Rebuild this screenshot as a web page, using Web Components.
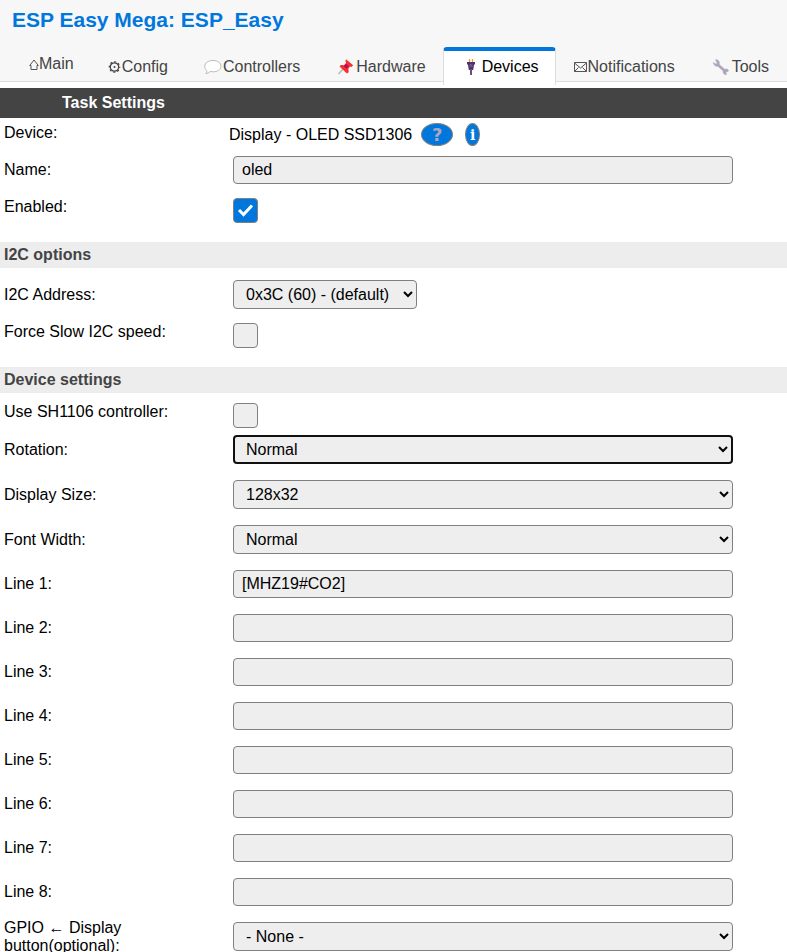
<!DOCTYPE html>
<html lang="en">
<head>
<meta charset="utf-8">
<title>ESP_Easy</title>
<style>
  html, body { margin: 0; }
  body { font: 16px/18px "Liberation Sans", Arial, sans-serif; color: #000; background: #fff; }
</style>
</head>
<body>
<esp-page>
  <esp-header slot="header" heading="ESP Easy Mega: ESP_Easy">
    <esp-tab icon="home" raised>Main</esp-tab>
    <esp-tab icon="gear">Config</esp-tab>
    <esp-tab icon="bubble">Controllers</esp-tab>
    <esp-tab icon="pin">Hardware</esp-tab>
    <esp-tab icon="plug" active>Devices</esp-tab>
    <esp-tab icon="mail">Notifications</esp-tab>
    <esp-tab icon="wrench">Tools</esp-tab>
  </esp-header>
  <esp-section main>Task Settings</esp-section>
  <esp-device label="Device:">Display - OLED SSD1306</esp-device>
  <esp-field type="text" label="Name:" value="oled"></esp-field>
  <esp-field type="checkbox" label="Enabled:" checked></esp-field>
  <esp-section>I2C options</esp-section>
  <esp-field type="select" label="I2C Address:" value="0x3C (60) - (default)" compact></esp-field>
  <esp-field type="checkbox" label="Force Slow I2C speed:"></esp-field>
  <esp-section>Device settings</esp-section>
  <esp-field type="checkbox" label="Use SH1106 controller:"></esp-field>
  <esp-field type="select" label="Rotation:" value="Normal" current></esp-field>
  <esp-field type="select" label="Display Size:" value="128x32"></esp-field>
  <esp-field type="select" label="Font Width:" value="Normal"></esp-field>
  <esp-field type="text" label="Line 1:" value="[MHZ19#CO2]"></esp-field>
  <esp-field type="text" label="Line 2:"></esp-field>
  <esp-field type="text" label="Line 3:"></esp-field>
  <esp-field type="text" label="Line 4:"></esp-field>
  <esp-field type="text" label="Line 5:"></esp-field>
  <esp-field type="text" label="Line 6:"></esp-field>
  <esp-field type="text" label="Line 7:"></esp-field>
  <esp-field type="text" label="Line 8:"></esp-field>
  <esp-field type="select" label="GPIO ← Display button(optional):" value="- None -"></esp-field>
</esp-page>
<script>
const define = (name, render) => customElements.define(name, class extends HTMLElement {
  connectedCallback() {
    if (this.shadowRoot) return;
    const t = document.createElement('template');
    t.innerHTML = render(this);
    this.attachShadow({ mode: 'open' }).append(t.content.cloneNode(true));
  }
});

const icons = {
  home: [10, 16, '<path d="M.7 9.500 5 4l4.300 5.500H8v4H2v-4z" fill="none" stroke="#555"/>'],
  gear: [14, 16, '<g fill="none" stroke="#444"><circle cx="6.500" cy="8" r="4.200" stroke-width="1.200"/><circle cx="6.500" cy="8" r="5.200" stroke-width="1.200" stroke-dasharray="2 2.084" stroke-dashoffset="1"/></g><circle cx="6.500" cy="8" r="1" fill="#444"/>'],
  bubble: [21, 16, '<path d="M11 1.500c4.600 0 8 2.300 8 5.700s-3.400 5.600-8 5.600c-1 0-2-.1-3-.3-1 1.200-2.300 1.900-4.200 2 .9-.8 1.200-1.700 1-2.900C3.400 10.500 2.800 9 2.800 7.200c0-3.400 3.600-5.700 8.200-5.700z" fill="#fff" stroke="#bbb"/>'],
  pin: [22, 16, '<path d="m9.500 9.500-5 5.500" stroke="#bbb" stroke-width="1.600"/><path d="m12 .3 7.200 6-1.800 1.700-1.300-.5-1.700 2 .3 3.700-1.800 1.300-7.400-7 1.300-1.400 3.400.2 2-2.300-.8-1.800z" fill="#f33131"/><path d="m9.500 7 2.500-2.500 2.800 3-2.300 2.300z" fill="#b90c58"/>'],
  plug: [22, 16, '<path d="M9.500 0v4M12.500 0v4" stroke="#f09a35" stroke-width="1.300"/><path d="M7 3h8v2l-1 1-.8 5H8.800L8 6 7 5z" fill="#4e3268"/><path d="M9.500 5h3v3h-3z" fill="#705288"/><path d="M11 10v6" stroke="#67517d" stroke-width="2"/>'],
  mail: [15, 16, '<path d="M1.500 3.500h12v9h-12zM1.500 4l6 5 6-5M1.500 12.500l4-4M13.500 12.500l-4-4" fill="none" stroke="#555"/>'],
  wrench: [23, 16, '<g transform="translate(1)"><path d="m7 5 8.500 7.500" stroke="#b0a6bb" stroke-width="2.800"/><path d="M3.300 3.500 6 5.200 7.200 4 5.500.8C8.500.5 10.200 3 9 5.500S4.500 8.300 3.300 3.500zM18.700 11.700 16.800 13l-1 .8.600 2C13.800 16 12.500 13.500 13.300 11.800s3.900-2.700 5.400-.1z" fill="#b0a6bb" stroke="#b0a6bb" stroke-width=".6"/></g>']
};

define('esp-page', () => `
  <style>:host { display: block; } main { display: block; }</style>
  <slot name="header"></slot>
  <main><slot></slot></main>`);

define('esp-header', el => `
  <style>
    :host { display: block; margin-bottom: 6px; background: #f7f7f7; border-bottom: 1px solid #ddd; }
    h1 { margin: 0; padding: 0 12px 8px; font-size: 21px; line-height: 39px; color: #07d; }
    nav { display: flex; align-items: flex-start; height: 34px; padding-left: 12px; }
  </style>
  <h1>${el.getAttribute('heading')}</h1>
  <nav><slot></slot></nav>`);

define('esp-tab', el => {
  const [w, h, art] = icons[el.getAttribute('icon')];
  return `
  <style>
    :host { display: block; flex: none; }
    a { display: flex; align-items: center; box-sizing: border-box; height: 38px; padding: 0 16px 2px;
        border: 1px solid transparent; border-top-width: 4px; border-bottom: 0; border-radius: 4px 4px 0 0;
        color: #444; text-decoration: none; white-space: nowrap; }
    :host([raised]) a { padding-bottom: 8px; }
    :host([active]) a { color: #000; background: #fff; border-color: #07d #ddd #ddd; }
    svg { flex: none; display: block; }
  </style>
  <a href="#"><svg width="${w}" height="${h}" viewBox="0 0 ${w} ${h}" aria-hidden="true">${art}</svg><slot></slot></a>`;
});

define('esp-section', () => `
  <style>
    :host { display: block; margin: 20px 0 4px; background: #ededed; color: #444; }
    :host([main]) { margin: 0; background: #444; color: #fff; }
    h2 { margin: 0; padding: 0 4px; font-size: 16px; line-height: 26px; }
    :host([main]) h2 { padding: 0 62px; line-height: 30px; }
  </style>
  <h2><slot></slot></h2>`);

define('esp-device', el => `
  <style>
    :host { display: grid; grid-template-columns: 225px 1fr; height: 30px; padding-left: 4px; }
    .label { padding-top: 6px; }
    .value { display: flex; align-items: center; height: 33px; }
    button { box-sizing: border-box; height: 23px; padding: 0; border: 1px solid gray; border-radius: 50%;
             background: #07d; font-weight: bold; font-size: 18px; line-height: 20px; }
    .help { width: 32px; margin-left: 9px; color: #b0a6bb; font-family: "DejaVu Sans", sans-serif; }
    .info { width: 15px; margin-left: 12px; color: #fff; font-family: "DejaVu Serif", serif; font-size: 14px; }
  </style>
  <span class="label">${el.getAttribute('label')}</span>
  <div class="value"><slot></slot><button class="help" type="button" title="Help">?</button><button class="info" type="button" title="Information">i</button></div>`);

define('esp-field', el => {
  const type = el.getAttribute('type');
  const value = el.getAttribute('value') || '';
  const control = type === 'select'
    ? `<select id="c"><option>${value}</option></select>`
    : type === 'checkbox'
      ? `<input id="c" type="checkbox"${el.hasAttribute('checked') ? ' checked' : ''}>`
      : `<input id="c" type="text" value="${value}">`;
  return `
  <style>
    :host { display: grid; grid-template-columns: 225px 1fr; align-items: center; padding: 8px 4px; }
    :host([type="checkbox"]) { align-items: start; height: 30px; padding-block: 0; }
    label { margin-block: -8px; }
    :host([type="checkbox"]) label { margin-block: 0; padding-top: 6px; }
    .control { display: flex; }
    input, select { box-sizing: border-box; margin: 0 0 0 4px; border: 1px solid gray; border-radius: 4px;
      background-color: #eee; color: #000; font: inherit; outline: none; }
    input[type="text"] { width: 100%; max-width: 500px; height: 28px; padding: 0 8px; }
    select { width: 100%; max-width: 500px; height: 29px; padding: 0 1px 0 8px; }
    :host([compact]) select { width: 184px; }
    :host([current]) select { border: 2px solid #101010; padding: 0 0 0 7px; }
    input[type="checkbox"] { appearance: none; width: 25px; height: 25px; margin-top: 6px; }
    input[type="checkbox"]:checked { background: #07d url("data:image/svg+xml,%3Csvg xmlns='http://www.w3.org/2000/svg' viewBox='0 0 23 23'%3E%3Cpath d='m5 11 4.500 4.500L18 6.500' fill='none' stroke='white' stroke-width='3'/%3E%3C/svg%3E"); }
  </style>
  <label for="c">${el.getAttribute('label')}</label>
  <div class="control">${control}</div>`;
});
</script>
</body>
</html>
